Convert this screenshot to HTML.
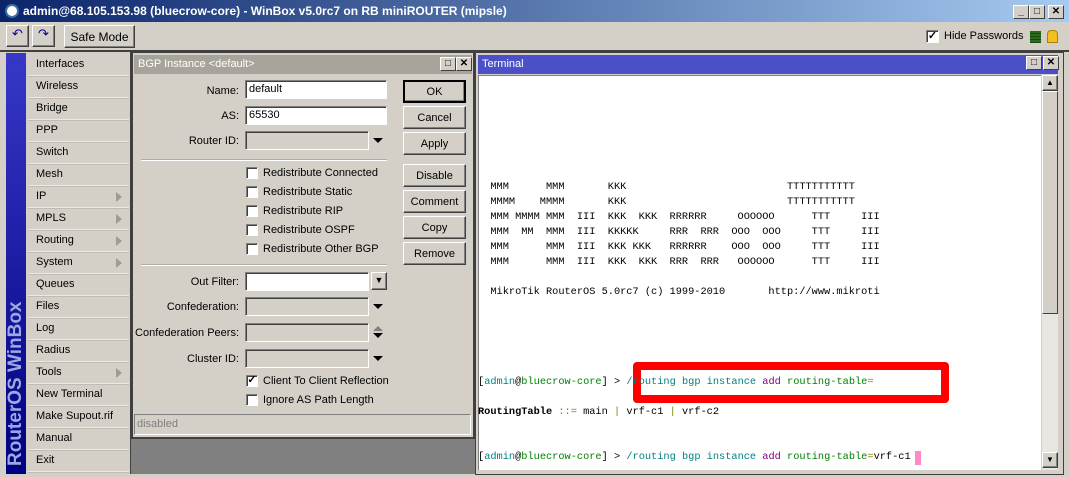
<!DOCTYPE html>
<html><head><meta charset="utf-8"><style>
*{margin:0;padding:0;box-sizing:border-box}
body{width:1069px;height:477px;background:#d4d0c8;font-family:"Liberation Sans",sans-serif;font-size:11px;position:relative;overflow:hidden;color:#000}
.a{position:absolute}
.btn{position:absolute;background:#d4d0c8;border:1px solid;border-color:#fff #404040 #404040 #fff;box-shadow:inset -1px -1px 0 #808080;text-align:center;font-size:11px}
.in{position:absolute;background:#fff;border:1px solid;border-color:#808080 #fff #fff #808080;box-shadow:inset 1px 1px 0 #404040;height:19px;padding:2px 3px;font-size:11px}
.dis{background:#d4d0c8}
.lbl{position:absolute;right:0;text-align:right;font-size:11px}
.cb{position:absolute;width:12px;height:12px;background:#fff;border:1px solid;border-color:#808080 #fff #fff #808080;box-shadow:inset 1px 1px 0 #404040}
.ct{position:absolute;font-size:11px}
.mi{position:absolute;left:28px;width:101px;height:22px;border-bottom:1px solid #ece9e2;box-shadow:0 1px 0 #c0bcb4;padding:4px 0 0 8px;font-size:11px}
.arr{position:absolute;right:7px;top:6px;width:0;height:0;border-left:6px solid #a09c94;border-top:5px solid transparent;border-bottom:5px solid transparent}
.tri{position:absolute;width:0;height:0;border-top:5px solid #000;border-left:5px solid transparent;border-right:5px solid transparent}
pre{font-family:"Liberation Mono",monospace;font-size:10.3px;line-height:15px}
.t{color:#008080}.g{color:#008000}.p{color:#800080}.o{color:#808000}
.wb{position:absolute;width:16px;height:14px;background:#d4d0c8;border:1px solid;border-color:#fff #404040 #404040 #fff;font-size:10px;line-height:11px;text-align:center;font-weight:bold}
</style></head><body>
<div class="a" style="left:0;top:0;width:1069px;height:22px;background:linear-gradient(90deg,#0a246a,#a6caf0)"></div>
<div class="a" style="left:5px;top:4px;width:14px;height:14px;border-radius:50%;background:#fff;border:2px solid #3a6ea5"></div>
<div class="a" style="left:23px;top:4px;color:#fff;font-weight:bold;font-size:12px">admin@68.105.153.98 (bluecrow-core) - WinBox v5.0rc7 on RB miniROUTER (mipsle)</div>
<div class="wb" style="left:1013px;top:5px">_</div>
<div class="wb" style="left:1029px;top:5px">□</div>
<div class="wb" style="left:1048px;top:5px">✕</div>
<div class="btn" style="left:6px;top:25px;width:23px;height:22px;color:#00008b;font-size:13px">↶</div>
<div class="btn" style="left:32px;top:25px;width:23px;height:22px;color:#00008b;font-size:13px">↷</div>
<div class="btn" style="left:64px;top:25px;width:71px;height:23px;padding-top:4px;font-size:12px">Safe Mode</div>
<div class="cb" style="left:926px;top:30px;width:13px;height:13px;font-size:11px;line-height:10px;text-align:center;font-weight:bold">✓</div>
<div class="ct" style="left:944px;top:30px;font-size:11px">Hide Passwords</div>
<div class="a" style="left:1030px;top:31px;width:11px;height:12px;background:repeating-linear-gradient(#2d6b1f 0 2px,#1a4a10 2px 3px)"></div>
<div class="a" style="left:1047px;top:30px;width:11px;height:13px;background:#f0c020;border-radius:4px 4px 0 0;border:1px solid #b08000"></div>
<div class="a" style="left:0;top:50px;width:1069px;height:2px;background:#404040"></div>
<div class="a" style="left:6px;top:53px;width:20px;height:421px;background:linear-gradient(#3838c8,#000080)"></div>
<div class="a" style="left:5px;top:466px;transform:rotate(-90deg);transform-origin:0 0;color:#9ca8e0;font-weight:bold;font-size:19px;white-space:nowrap;width:180px;line-height:22px">RouterOS WinBox</div>
<div class="mi" style="top:54px">Interfaces</div>
<div class="mi" style="top:76px">Wireless</div>
<div class="mi" style="top:98px">Bridge</div>
<div class="mi" style="top:120px">PPP</div>
<div class="mi" style="top:142px">Switch</div>
<div class="mi" style="top:164px">Mesh</div>
<div class="mi" style="top:186px">IP<div class="arr"></div></div>
<div class="mi" style="top:208px">MPLS<div class="arr"></div></div>
<div class="mi" style="top:230px">Routing<div class="arr"></div></div>
<div class="mi" style="top:252px">System<div class="arr"></div></div>
<div class="mi" style="top:274px">Queues</div>
<div class="mi" style="top:296px">Files</div>
<div class="mi" style="top:318px">Log</div>
<div class="mi" style="top:340px">Radius</div>
<div class="mi" style="top:362px">Tools<div class="arr"></div></div>
<div class="mi" style="top:384px">New Terminal</div>
<div class="mi" style="top:406px">Make Supout.rif</div>
<div class="mi" style="top:428px">Manual</div>
<div class="mi" style="top:450px">Exit</div>
<div class="a" style="left:130px;top:52px;width:346px;height:422px;background:#808080;border-left:1px solid #404040"></div>
<div class="a" style="left:131px;top:52px;width:344px;height:387px;background:#d4d0c8;border:2px solid #404040;border-top:1px solid #404040"></div>
<div class="a" style="left:134px;top:55px;width:338px;height:19px;background:#a8a49c"></div>
<div class="a" style="left:138px;top:58px;color:#fff;font-size:11px">BGP Instance &lt;default&gt;</div>
<div class="wb" style="left:440px;top:57px">□</div>
<div class="wb" style="left:456px;top:57px">✕</div>
<div class="a" style="left:134px;top:0;width:105px;height:477px">
<div class="lbl" style="top:85px">Name:</div>
<div class="lbl" style="top:110px">AS:</div>
<div class="lbl" style="top:135px">Router ID:</div>
<div class="lbl" style="top:276px">Out Filter:</div>
<div class="lbl" style="top:301px">Confederation:</div>
<div class="lbl" style="top:327px">Confederation Peers:</div>
<div class="lbl" style="top:353px">Cluster ID:</div>
</div>
<div class="in" style="left:245px;top:80px;width:142px">default</div>
<div class="in" style="left:245px;top:106px;width:142px">65530</div>
<div class="in dis" style="left:245px;top:131px;width:124px"></div><div class="tri" style="left:373px;top:138px"></div>
<div class="a" style="left:141px;top:159px;width:246px;height:2px;border-top:1px solid #b0aca4;border-bottom:1px solid #fff"></div>
<div class="cb" style="left:246px;top:167px"></div><div class="ct" style="left:263px;top:167px">Redistribute Connected</div>
<div class="cb" style="left:246px;top:186px"></div><div class="ct" style="left:263px;top:186px">Redistribute Static</div>
<div class="cb" style="left:246px;top:205px"></div><div class="ct" style="left:263px;top:205px">Redistribute RIP</div>
<div class="cb" style="left:246px;top:224px"></div><div class="ct" style="left:263px;top:224px">Redistribute OSPF</div>
<div class="cb" style="left:246px;top:243px"></div><div class="ct" style="left:263px;top:243px">Redistribute Other BGP</div>
<div class="a" style="left:141px;top:264px;width:246px;height:2px;border-top:1px solid #b0aca4;border-bottom:1px solid #fff"></div>
<div class="in" style="left:245px;top:272px;width:124px"></div>
<div class="btn" style="left:371px;top:272px;width:16px;height:18px;font-size:9px;line-height:14px">▼</div>
<div class="in dis" style="left:245px;top:297px;width:124px"></div><div class="tri" style="left:373px;top:304px"></div>
<div class="in dis" style="left:245px;top:323px;width:124px"></div>
<div class="a" style="left:373px;top:326px;width:0;height:0;border-bottom:5px solid #808080;border-left:5px solid transparent;border-right:5px solid transparent"></div><div class="tri" style="left:373px;top:333px"></div>
<div class="in dis" style="left:245px;top:349px;width:124px"></div><div class="tri" style="left:373px;top:356px"></div>
<div class="cb" style="left:246px;top:375px;font-size:11px;line-height:9px;text-align:center;font-weight:bold">✓</div><div class="ct" style="left:263px;top:375px">Client To Client Reflection</div>
<div class="cb" style="left:246px;top:394px"></div><div class="ct" style="left:263px;top:394px">Ignore AS Path Length</div>
<div class="a" style="left:134px;top:414px;width:337px;height:21px;border:1px solid;border-color:#808080 #fff #fff #808080;color:#808080;padding:3px 2px;font-size:11px">disabled</div>
<div class="btn" style="left:403px;top:80px;width:63px;height:23px;padding-top:4px;border:2px solid #000">OK</div>
<div class="btn" style="left:403px;top:106px;width:63px;height:23px;padding-top:5px">Cancel</div>
<div class="btn" style="left:403px;top:132px;width:63px;height:23px;padding-top:5px">Apply</div>
<div class="btn" style="left:403px;top:164px;width:63px;height:23px;padding-top:5px">Disable</div>
<div class="btn" style="left:403px;top:190px;width:63px;height:23px;padding-top:5px">Comment</div>
<div class="btn" style="left:403px;top:216px;width:63px;height:23px;padding-top:5px">Copy</div>
<div class="btn" style="left:403px;top:242px;width:63px;height:23px;padding-top:5px">Remove</div>
<div class="a" style="left:475px;top:52px;width:589px;height:423px;background:#d4d0c8;border:1px solid #404040"></div>
<div class="a" style="left:478px;top:55px;width:580px;height:19px;background:#4b4fc8"></div>
<div class="a" style="left:482px;top:58px;color:#fff;font-size:11px">Terminal</div>
<div class="wb" style="left:1026px;top:56px">□</div>
<div class="wb" style="left:1043px;top:56px">✕</div>
<div class="a" style="left:478px;top:75px;width:563px;height:395px;background:#fff;border-left:1px solid #808080;border-top:1px solid #808080"></div>
<div class="a" style="left:1042px;top:75px;width:16px;height:395px;background:#e8e6e0"></div>
<div class="btn" style="left:1042px;top:75px;width:16px;height:16px;font-size:8px;line-height:13px">▲</div>
<div class="a" style="left:1042px;top:91px;width:16px;height:223px;background:#d4d0c8;border:1px solid;border-color:#fff #404040 #404040 #fff"></div>
<div class="btn" style="left:1042px;top:452px;width:16px;height:16px;font-size:8px;line-height:13px">▼</div>
<div class="a" style="left:633px;top:362px;width:316px;height:41px;border:8px solid #f00;border-radius:4px"></div>
<pre class="a" style="left:478px;top:180px">  MMM      MMM       KKK                          TTTTTTTTTTT
  MMMM    MMMM       KKK                          TTTTTTTTTTT
  MMM MMMM MMM  III  KKK  KKK  RRRRRR     OOOOOO      TTT     III
  MMM  MM  MMM  III  KKKKK     RRR  RRR  OOO  OOO     TTT     III
  MMM      MMM  III  KKK KKK   RRRRRR    OOO  OOO     TTT     III
  MMM      MMM  III  KKK  KKK  RRR  RRR   OOOOOO      TTT     III

  MikroTik RouterOS 5.0rc7 (c) 1999-2010       http://www.mikroti





[<span class="t">admin</span>@<span class="g">bluecrow-core</span>] &gt; <span class="t">/routing bgp instance</span> <span class="p">add</span> <span class="g">routing-table</span><span class="o">=</span>

<b>RoutingTable</b> <span class="o">::=</span> main <span class="o">|</span> vrf-c1 <span class="o">|</span> vrf-c2


[<span class="t">admin</span>@<span class="g">bluecrow-core</span>] &gt; <span class="t">/routing bgp instance</span> <span class="p">add</span> <span class="g">routing-table</span><span class="o">=</span>vrf-c1 </pre>
<div class="a" style="left:915px;top:451px;width:6px;height:14px;background:#ff88c8"></div>
</body></html>
